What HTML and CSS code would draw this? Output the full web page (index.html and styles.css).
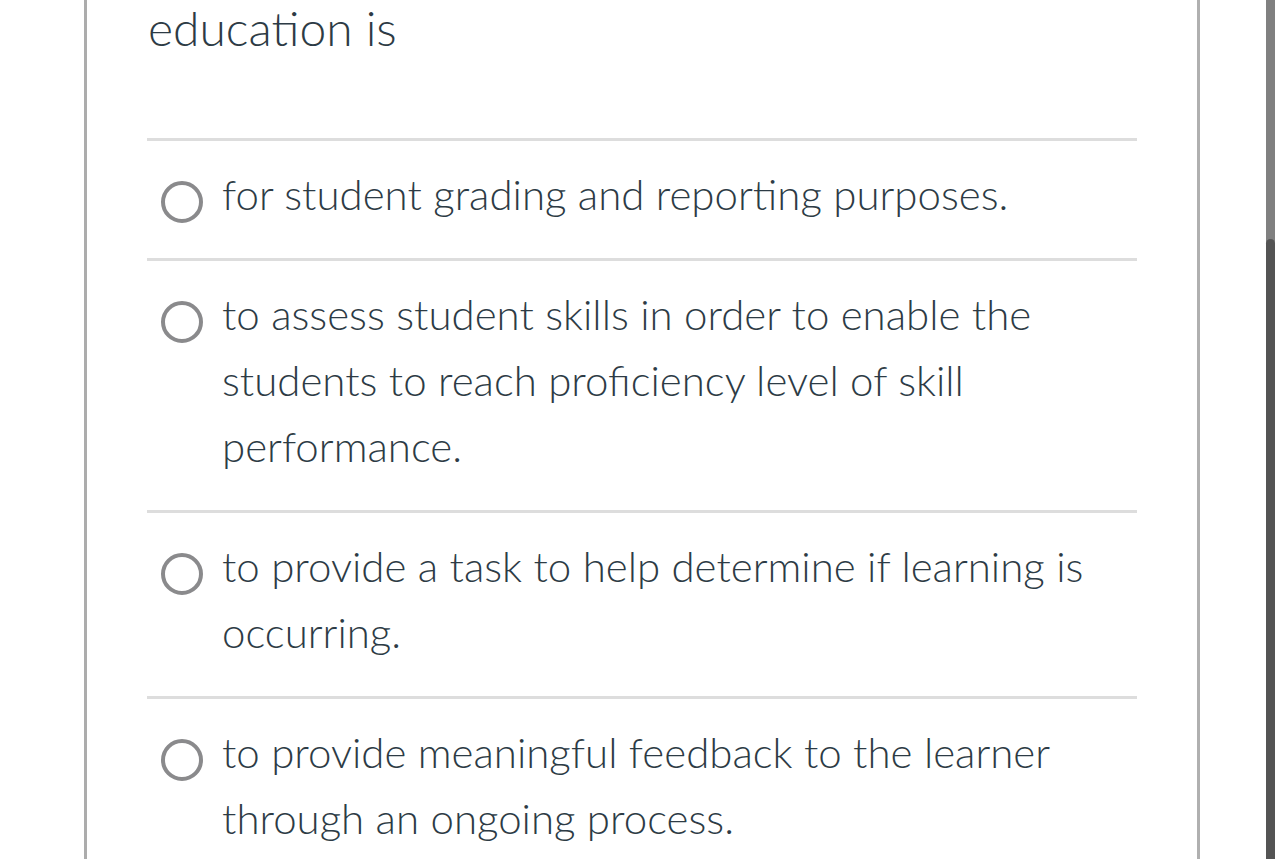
FILE: index.html
```html
<!DOCTYPE html>
<html>
<head>
<meta charset="utf-8">
<link rel="stylesheet" href="styles.css">
</head>
<body>
<div class="page">
  <div class="card">
    <div class="question">education is</div>
    <div class="answers">
      <div class="answer">
        <span class="radio"></span>
        <span class="label">for student grading and reporting purposes.</span>
      </div>
      <div class="answer">
        <span class="radio"></span>
        <span class="label">to assess student skills in order to enable the students to reach proficiency level of skill performance.</span>
      </div>
      <div class="answer">
        <span class="radio"></span>
        <span class="label">to provide a task to help determine if learning is occurring.</span>
      </div>
      <div class="answer">
        <span class="radio"></span>
        <span class="label">to provide meaningful feedback to the learner through an ongoing process.</span>
      </div>
    </div>
  </div>
  <div class="scrolltrack"><div class="scrollthumb"></div></div>
</div>
</body>
</html>
```
FILE: styles.css
```css
html, body {
  margin: 0;
  padding: 0;
  background: #ffffff;
  overflow: hidden;
}
.page {
  display: flex;
  height: 859px;
  font-family: Lato, "Open Sans", sans-serif;
  font-weight: 300;
  color: #2d3b45;
  font-size: 42px;
  line-height: 66px;
}
.card {
  margin-left: 84px;
  border-left: 3px solid #acacac;
  border-right: 3px solid #b0b0b0;
  padding: 0 60px;
  box-sizing: border-box;
  width: 1116px;
  flex: none;
}
.question {
  font-size: 48px;
  margin-top: -5px;
  margin-bottom: 77px;
  padding-left: 1px;
}
.answer {
  display: flex;
  align-items: flex-start;
  border-top: 3px solid #dddddd;
  padding: 20px 0 31px;
}
.radio {
  flex: none;
  width: 42px;
  height: 42px;
  box-sizing: border-box;
  border: 4px solid #8a8a8c;
  border-radius: 50%;
  margin: 20px 0 0 14px;
}
.label {
  margin-left: 19px;
  flex: 1;
}
.scrolltrack {
  margin-left: auto;
  margin-right: 9px;
  width: 9px;
  background: #808080;
  display: flex;
  flex-direction: column;
}
.scrollthumb {
  margin-top: 239px;
  flex: 1;
  background: #545454;
  border-radius: 5px 5px 0 0;
}
```
